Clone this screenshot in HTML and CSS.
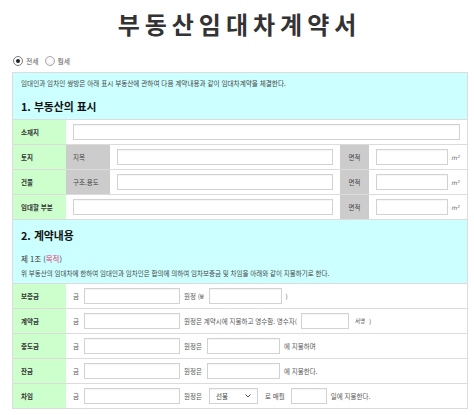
FILE: index.html
```html
<!DOCTYPE html>
<html lang="ko">
<head>
<meta charset="utf-8">
<title>부동산임대차계약서</title>
<link rel="stylesheet" href="styles.css">
</head>
<body>
<h1 class="title">부동산임대차계약서</h1>
<div class="radios">
  <span class="radio checked"></span><span class="rlabel">전세</span>
  <span class="radio"></span><span class="rlabel">월세</span>
</div>
<div class="doc">
  <div class="head1">
    <p class="intro">임대인과 임차인 쌍방은 아래 표시 부동산에 관하여 다음 계약내용과 같이 임대차계약을 체결한다.</p>
    <h2 class="sec">1. 부동산의 표시</h2>
  </div>
  <div class="grid1">
    <div class="lab">소재지</div>
    <div class="cell span4"><div class="inp full"></div></div>

    <div class="lab">토지</div>
    <div class="gray">지목</div>
    <div class="cell"><div class="inp full"></div></div>
    <div class="gray center">면적</div>
    <div class="cell"><div class="inp area"></div><span class="unit">m<sup>2</sup></span></div>

    <div class="lab">건물</div>
    <div class="gray">구조.용도</div>
    <div class="cell"><div class="inp full"></div></div>
    <div class="gray center">면적</div>
    <div class="cell"><div class="inp area"></div><span class="unit">m<sup>2</sup></span></div>

    <div class="lab">임대할 부분</div>
    <div class="cell span2"><div class="inp full"></div></div>
    <div class="gray center">면적</div>
    <div class="cell"><div class="inp area"></div><span class="unit">m<sup>2</sup></span></div>
  </div>
  <div class="head2">
    <h2 class="sec">2. 계약내용</h2>
    <p class="art">제 1조 (<span class="pink">목적</span>)</p>
    <p class="desc">위 부동산의 임대차에 한하여 임대인과 임차인은 합의에 의하여 임차보증금 및 차임을 아래와 같이 지불하기로 한다.</p>
  </div>
  <div class="grid2">
    <div class="lab">보증금</div>
    <div class="cell2"><span class="geum">금</span><div class="inp amt"></div><span class="t">원정 (₩</span><div class="inp w72"></div><span class="t">)</span></div>

    <div class="lab">계약금</div>
    <div class="cell2"><span class="geum">금</span><div class="inp amt"></div><span class="t">원정은 계약시에 지불하고 영수함. 영수자(</span><div class="inp w48"></div><span class="t small">서명</span><span class="t">)</span></div>

    <div class="lab">중도금</div>
    <div class="cell2"><span class="geum">금</span><div class="inp amt"></div><span class="t">원정은</span><div class="inp w72"></div><span class="t">에 지불하며</span></div>

    <div class="lab">잔금</div>
    <div class="cell2"><span class="geum">금</span><div class="inp amt"></div><span class="t">원정은</span><div class="inp w72"></div><span class="t">에 지불한다.</span></div>

    <div class="lab">차임</div>
    <div class="cell2"><span class="geum">금</span><div class="inp amt"></div><span class="t">원정은</span><div class="inp sel"><span>선불</span><svg class="chev" width="6" height="4" viewBox="0 0 6 4"><path d="M0.5 0.5 L3 3 L5.5 0.5" fill="none" stroke="#555" stroke-width="1"/></svg></div><span class="t">로 매월</span><div class="inp w36"></div><span class="t">일에 지불한다.</span></div>
  </div>
</div>
</body>
</html>
```
FILE: styles.css
```css
* { box-sizing: border-box; }
html, body { margin: 0; padding: 0; background: #fff; }
body {
  font-family: "Noto Sans CJK KR", "Noto Sans", sans-serif;
  color: #444;
  width: 474px;
}
p, h1, h2 { margin: 0; }

.title {
  margin-top: 9px;
  height: 30px;
  line-height: 30px;
  font-size: 24px;
  font-weight: 700;
  text-align: center;
  letter-spacing: 5px;
  text-indent: 5px;
  color: #333;
}

.radios {
  display: flex;
  align-items: center;
  height: 14px;
  margin: 15px 0 4px 13px;
  font-size: 6.8px;
}
.radio {
  width: 10px;
  height: 10px;
  border: 1px solid #aaa;
  border-radius: 50%;
  background: radial-gradient(circle at 50% 40%, #fff 30%, #e4e4e4 100%);
  position: relative;
  margin-right: 3px;
}
.radio.checked::after {
  content: "";
  position: absolute;
  left: 2px; top: 2px;
  width: 4px; height: 4px;
  border-radius: 50%;
  background: #222;
}
.radio.checked { border-color: #777; background: #fff; }
.rlabel { margin-right: 6px; color: #555; }

.doc {
  margin-left: 12px;
  width: 456px;
  border: 1px solid #dcdcdc;
  border-bottom: none;
}

.head1 {
  background: #ccffff;
  padding: 5px 8px 6px;
  border-bottom: 1px solid #dcdcdc;
}
.intro { font-size: 6.6px; line-height: 10px; color: #444; }
.sec {
  font-size: 10.8px;
  font-weight: 700;
  line-height: 14px;
  color: #111;
  margin-top: 11px;
}

.grid1 {
  display: grid;
  grid-template-columns: 53px 44px 230px 29px 98px;
  grid-auto-rows: 25px;
}
.grid1 > div, .grid2 > div { border-bottom: 1px solid #dcdcdc; }

.lab {
  background: #ccffcc;
  font-size: 6.5px;
  font-weight: 700;
  color: #333;
  display: flex;
  align-items: center;
  padding-left: 8px;
}
.gray {
  background: #cccccc;
  font-size: 6.5px;
  color: #444;
  display: flex;
  align-items: center;
  padding-left: 7px;
}
.gray.center { justify-content: center; padding-left: 0; }
.cell {
  display: flex;
  align-items: center;
  padding: 0 7px;
  background: #fff;
}
.span4 { grid-column: span 4; }
.span2 { grid-column: span 2; }

.inp {
  height: 16px;
  border: 1px solid #d2d2d2;
  background: #fff;
  box-shadow: inset 0 1px 1px rgba(0,0,0,0.04);
}
.full { flex: 1; }
.area { width: 72px; }
.unit {
  font-family: "DejaVu Sans", sans-serif;
  font-size: 6px;
  font-style: italic;
  margin-left: 4px;
  color: #666;
}
.unit sup { font-size: 4px; vertical-align: 2px; }

.head2 {
  background: #ccffff;
  padding: 8px 8px 5px;
  border-bottom: 1px solid #dcdcdc;
}
.head2 .sec { margin-top: 0; }
.art { font-size: 7.5px; line-height: 12px; margin-top: 11px; color: #333; }
.pink { color: #e5336c; }
.desc { font-size: 6.5px; line-height: 10px; margin-top: 3px; color: #444; }

.grid2 {
  display: grid;
  grid-template-columns: 53px 1fr;
  grid-auto-rows: 25px;
}
.cell2 {
  display: flex;
  align-items: center;
  padding-left: 7px;
  font-size: 6.5px;
  color: #555;
  gap: 4px;
}
.geum { width: 7px; }
.amt { width: 96px; }
.w72 { width: 73px; margin-left: 1px; }
.w48 { width: 48px; }
.w36 { width: 36px; margin-left: 2px; }
.t { white-space: nowrap; }
.small { font-size: 5.5px; margin-left: 2px; }
.sel {
  width: 49px;
  display: flex;
  align-items: center;
  justify-content: space-between;
  padding: 0 6px 0 6px;
  font-size: 6.5px;
  color: #444;
  margin-left: 3px;
  margin-right: 3px;
}
.chev { display: block; }
```
